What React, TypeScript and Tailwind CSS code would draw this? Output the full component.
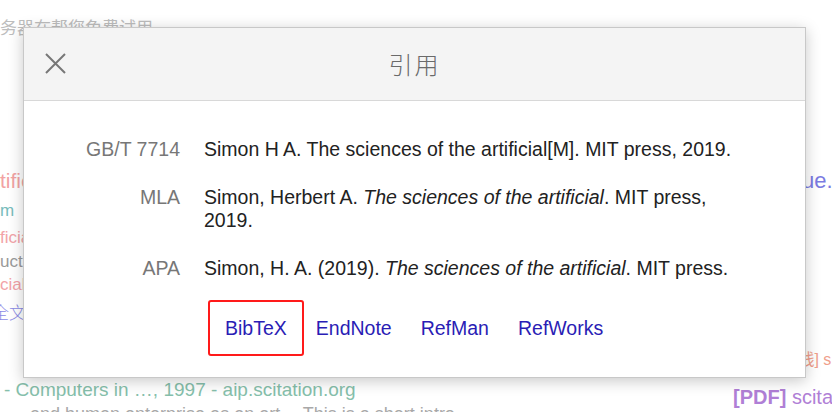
import React from "react";

const sans = "font-['Liberation_Sans','Noto_Sans_CJK_SC',Arial,sans-serif]";

function CloseIcon() {
  return (
    <svg width="21" height="21" viewBox="0 0 21 21" fill="none">
      <path d="M1 1 L20 20 M20 1 L1 20" stroke="#777777" strokeWidth="2" strokeLinecap="butt" />
    </svg>
  );
}

function Row({ label, children }: { label: string; children: React.ReactNode }) {
  return (
    <div className="flex">
      <div className="w-[132px] shrink-0 text-right text-[#777777]">{label}</div>
      <div className="ml-[24px] w-[540px] text-[#222222]">{children}</div>
    </div>
  );
}

export default function App() {
  return (
    <div className={`relative w-[832px] h-[412px] overflow-hidden bg-white ${sans}`}>
      {/* page behind the dialog */}
      <div className="flex w-full">
        <div className="w-[500px] shrink-0 whitespace-nowrap">
          <div className="mt-[19px] h-[20px] text-[17px] leading-[20px] text-[#bdbdbd]">务器在帮您免费试用</div>
          <div className="mt-[129px] h-[26px] text-[21px] leading-[26px] text-[#f2a3a3]">tificial</div>
          <div className="mt-[5px] h-[24px] text-[17px] leading-[24px] text-[#78bcbc]">m</div>
          <div className="mt-[3px] h-[24px] text-[17px] leading-[24px] text-[#f2a3a8]">ficial</div>
          <div className="mt-[0px] h-[24px] text-[17px] leading-[24px] text-[#9a9a9a]">uction</div>
          <div className="-mt-[1px] h-[24px] text-[17px] leading-[24px] text-[#f2a3a8]">cial</div>
          <div className="mt-[3px] h-[24px] text-[17px] leading-[24px] text-[#8c8ce6] -ml-[8px] font-['Noto_Sans_CJK_SC',sans-serif] font-light">全文</div>
          <div className="mt-[55px] h-[22px] text-[19px] leading-[22px] text-[#86bfab] ml-[4px]">- Computers in …, 1997 - aip.scitation.org</div>
          <div className="mt-[2px] h-[22px] text-[18px] leading-[22px] text-[#a8a8a8] ml-[30px]">and human enterprise as an art…  This is a short intro</div>
        </div>
        <div className="ml-auto w-[100px] shrink-0 whitespace-nowrap">
          <div className="mt-[168px] h-[26px] text-[22px] leading-[26px] text-[#7b7be2] ml-[70px]">ue.</div>
          <div className="mt-[156px] h-[20px] text-[16px] leading-[20px] text-[#f0a08c] ml-[46px]">[在线] s</div>
          <div className="mt-[16px] h-[22px] text-[20px] leading-[22px] text-[#b07fd6] ml-[1px]"><span className="font-bold">[PDF]</span> scitation</div>
        </div>
      </div>

      {/* dialog */}
      <div className="absolute left-[23px] top-[27px] w-[783px] h-[351px] border border-[#c8c8c8] bg-white shadow-[0_3px_14px_rgba(0,0,0,0.22)] flex flex-col">
        <div className="relative h-[73px] shrink-0 bg-[#f4f4f4] border-b border-[#d8d8d8] flex items-center justify-center">
          <button className="absolute left-[21px] top-[25px] w-[21px] h-[21px] flex items-center justify-center">
            <CloseIcon />
          </button>
          <div className="text-[24px] leading-[30px] text-[#6a6a6a] font-['Noto_Sans_CJK_SC',sans-serif] font-light tracking-[2px] -mt-[1px]">引用</div>
        </div>
        <div className="pt-[37px] pl-[24px] text-[19.5px] leading-[23px] flex flex-col gap-[25px]">
          <Row label="GB/T 7714">Simon H A. The sciences of the artificial[M]. MIT press, 2019.</Row>
          <Row label="MLA">
            Simon, Herbert A. <i>The sciences of the artificial</i>. MIT press, 2019.
          </Row>
          <Row label="APA">
            Simon, H. A. (2019). <i>The sciences of the artificial</i>. MIT press.
          </Row>
        </div>
        <div className="mt-[20px] ml-[184px] flex items-center text-[19.5px] leading-[22px] text-[#2a1db5]">
          <a className="relative px-[17px] py-[17px] mr-[12px]">
            BibTeX
            <span className="absolute left-0 top-0 w-[96px] h-[56px] border-2 border-[#ff1a1a] rounded-[3px]" />
          </a>
          <a className="mr-[29px]">EndNote</a>
          <a className="mr-[29px]">RefMan</a>
          <a>RefWorks</a>
        </div>
      </div>
    </div>
  );
}
